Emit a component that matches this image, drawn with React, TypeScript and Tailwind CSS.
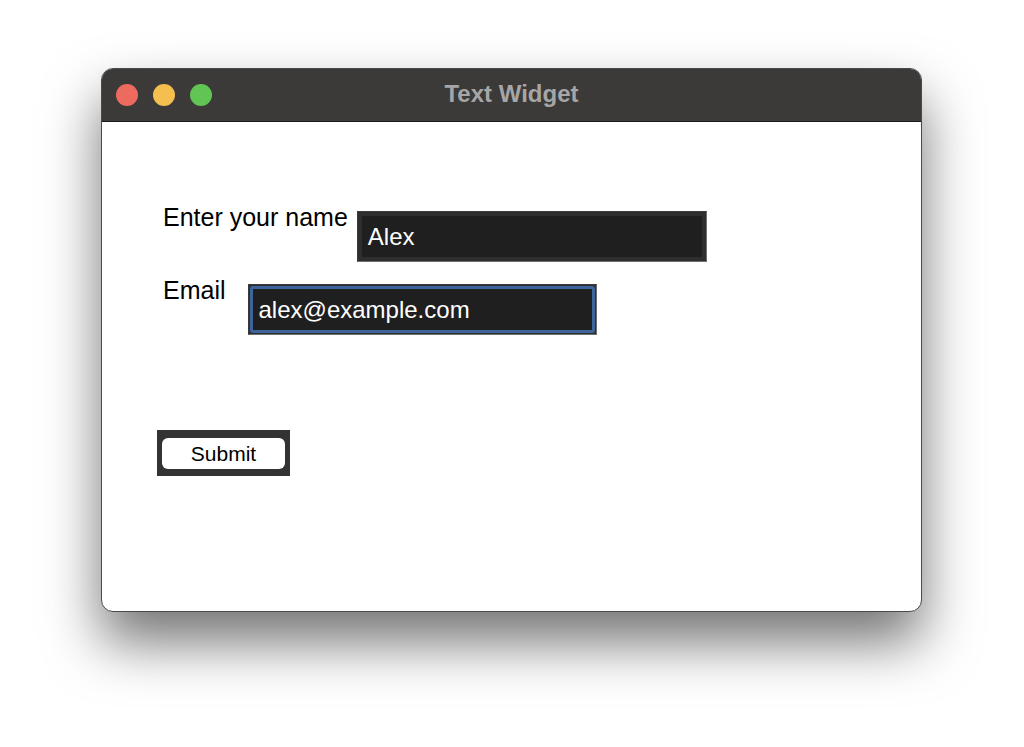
export default function App() {
  return (
    <div
      className="flex h-[747px] w-[1024px] items-start bg-white pl-[101px] pt-[68px]"
      style={{ fontFamily: '"Liberation Sans", Arial, sans-serif' }}
    >
      <div className="flex h-[544px] w-[821px] flex-col overflow-hidden rounded-[12px] border border-[#4a4a4a] bg-white shadow-[0_30px_55px_rgba(0,0,0,0.55)]">
        {/* title bar */}
        <div className="relative flex h-[53px] shrink-0 items-center border-b border-[#1a1a1a] bg-[#3b3a38] pl-[14px]">
          <div className="flex gap-[15px]">
            <span className="h-[22px] w-[22px] rounded-full bg-[#ed6a5e]" />
            <span className="h-[22px] w-[22px] rounded-full bg-[#f5bf4f]" />
            <span className="h-[22px] w-[22px] rounded-full bg-[#61c554]" />
          </div>
          <span className="absolute inset-x-0 top-[11px] text-center text-[24px] font-bold leading-[28px] text-[#a6a6a6]">
            Text Widget
          </span>
        </div>

        {/* body */}
        <div className="flex flex-col pl-[55px] pt-[83px]">
          <div className="flex items-start pl-[6px]">
            <span className="text-[25px] leading-[25px] text-black">Enter your name</span>
            <div className="ml-[9px] mt-[6px] flex h-[51px] w-[350px] border border-[#6f6f6f] border-t-[#3a3a3a] border-l-[#3a3a3a] bg-[#2e2e2e] p-[4px]">
              <div className="flex flex-1 items-center bg-[#1f1f1f] pl-[6px] text-[24px] text-white">Alex</div>
            </div>
          </div>

          <div className="mt-[16px] flex items-start pl-[6px]">
            <span className="text-[25px] leading-[25px] text-black">Email</span>
            <div className="ml-[22px] mt-[6px] flex h-[51px] w-[349px] border border-[#6f6f6f] border-t-[#3a3a3a] border-l-[#3a3a3a] bg-[#2e2e2e] p-[1px]">
              <div className="flex flex-1 items-center rounded-[3px] border-[3px] border-[#3d649b] bg-[#1f1f1f] pl-[6px] text-[24px] text-white">
                alex@example.com
              </div>
            </div>
          </div>

          <div className="mt-[95px] flex">
            <div className="flex h-[46px] w-[133px] bg-[#333333] px-[5px] pb-[7px] pt-[8px]">
              <button className="flex flex-1 items-center justify-center rounded-[6px] bg-white text-[21px] text-black">
                Submit
              </button>
            </div>
          </div>
        </div>
      </div>
    </div>
  );
}
